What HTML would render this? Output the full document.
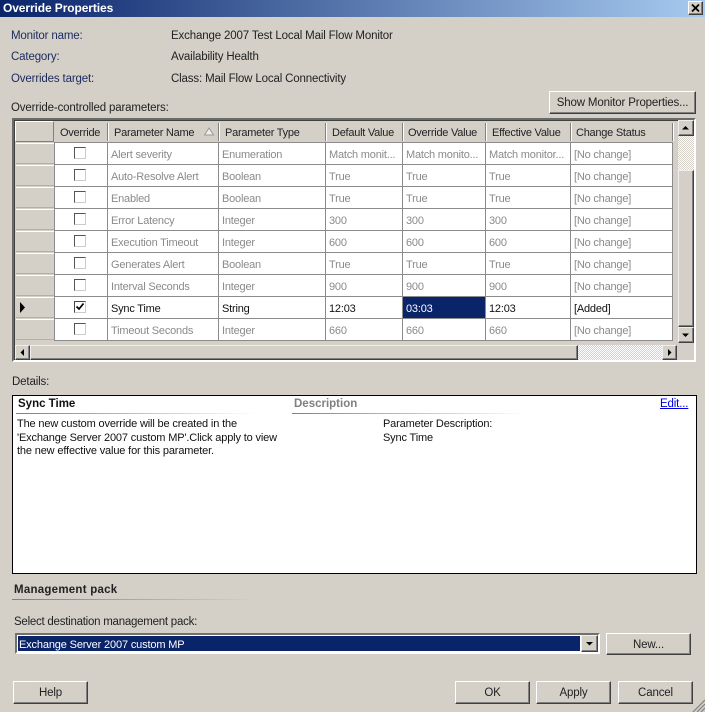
<!DOCTYPE html>
<html><head><meta charset="utf-8"><title>Override Properties</title>
<style>
html,body{margin:0;padding:0}
body{width:705px;height:712px;overflow:hidden;background:#d4d0c8;position:relative;font:11.5px/14px "Liberation Sans",sans-serif;color:#222}
div,span,a{position:absolute;white-space:nowrap;box-sizing:border-box}
.t{letter-spacing:-.15px;margin-top:1px}
.btn.t{margin-top:0}
.s{font-size:11px;letter-spacing:-.15px;margin-top:1px}
.n{color:#1a2a5e}
.btn{background:#d4d0c8;border:1px solid;border-color:#fff #404040 #404040 #fff;box-shadow:inset -1px -1px 0 #808080;text-align:center;color:#222}
.sb{background:#d4d0c8;border:1px solid;border-color:#eee #404040 #404040 #eee;box-shadow:inset -1px -1px 0 #808080}
.dith{background:repeating-conic-gradient(#fff 0 25%,#d4d0c8 0 50%) 0 0/2px 2px}
.h{top:123px;height:20px;line-height:20px;color:#222;font-size:11px;letter-spacing:-.25px}
.sep{top:123px;height:18px;width:2px;background:#fff;border-left:1px solid #808080}
.rh{left:16px;width:38px;height:21px;background:#d4d0c8;border-top:1px solid #fff;border-bottom:1px solid #b4b0a8}
.hl{left:54px;width:619px;height:1px;background:#8c8c8c}
.vl{top:142px;height:198px;width:1px;background:#8c8c8c}
.c{height:21px;line-height:22px;color:#8a8a8a;font-size:11px;letter-spacing:-.2px;margin-top:1px}
.k{color:#111}
.cb{left:74px;width:12px;height:12px;background:#fff;border:1px solid;border-color:#555 #ccc #ccc #555}
</style></head><body>

<div style="left:0;top:0;width:705px;height:17px;background:linear-gradient(90deg,#0a246a,#a6caf0)"></div>
<div style="left:3px;top:1px;color:#fff;font-weight:bold;font-size:12px;line-height:15px;letter-spacing:-.1px">Override Properties</div>
<div class="btn" style="left:688px;top:1px;width:15px;height:14px"><svg width="13" height="12" style="position:absolute;left:0;top:0"><path d="M3 2.5L10 9.5M10 2.5L3 9.5" stroke="#000" stroke-width="1.8" fill="none"/></svg></div>

<div class="t n" style="left:11px;top:28px">Monitor name:</div>
<div class="t" style="left:171px;top:28px">Exchange 2007 Test Local Mail Flow Monitor</div>
<div class="t n" style="left:11px;top:49px">Category:</div>
<div class="t" style="left:171px;top:49px">Availability Health</div>
<div class="t n" style="left:11px;top:71px">Overrides target:</div>
<div class="t" style="left:171px;top:71px">Class: Mail Flow Local Connectivity</div>
<div class="t" style="left:11px;top:100px">Override-controlled parameters:</div>
<div class="btn t" style="left:549px;top:91px;width:147px;height:23px;line-height:22px">Show Monitor Properties...</div>

<!-- Grid frame -->
<div style="left:12px;top:118px;width:684px;height:244px;border:2px solid;border-color:#6a6a66 #fff #fff #6a6a66;background:#d4d0c8;box-shadow:inset 1px 1px 0 #404040"></div>
<div style="left:54px;top:142px;width:619px;height:198px;background:#fff"></div>
<div style="left:15px;top:121px;width:39px;height:21px;border-top:1px solid #fff;border-left:1px solid #fff;border-right:1px solid #808080;border-bottom:1px solid #808080"></div>

<div class="h" style="left:60px">Override</div>
<div class="h" style="left:114px">Parameter Name</div>
<div class="h" style="left:225px">Parameter Type</div>
<div class="h" style="left:332px">Default Value</div>
<div class="h" style="left:408px">Override Value</div>
<div class="h" style="left:492px">Effective Value</div>
<div class="h" style="left:576px">Change Status</div>
<svg style="position:absolute;left:204px;top:127px" width="11" height="9"><path d="M5 1L9.5 8H.5Z" fill="#eee" stroke="#999" stroke-width="1"/></svg>
<div class="sep" style="left:107px"></div>
<div class="sep" style="left:218px"></div>
<div class="sep" style="left:325px"></div>
<div class="sep" style="left:402px"></div>
<div class="sep" style="left:485px"></div>
<div class="sep" style="left:570px"></div>
<div class="sep" style="left:672px"></div>

<!-- Row headers -->
<div class="rh" style="top:143px"></div><div class="rh" style="top:165px"></div><div class="rh" style="top:187px"></div><div class="rh" style="top:209px"></div><div class="rh" style="top:231px"></div><div class="rh" style="top:253px"></div><div class="rh" style="top:275px"></div><div class="rh" style="top:297px"></div><div class="rh" style="top:319px"></div>
<div style="left:54px;top:142px;width:1px;height:198px;background:#8c8c8c"></div>

<!-- Grid lines -->
<div class="hl" style="top:142px"></div><div class="hl" style="top:164px"></div><div class="hl" style="top:186px"></div><div class="hl" style="top:208px"></div><div class="hl" style="top:230px"></div><div class="hl" style="top:252px"></div><div class="hl" style="top:274px"></div><div class="hl" style="top:296px"></div><div class="hl" style="top:318px"></div><div class="hl" style="top:340px"></div>
<div class="vl" style="left:107px"></div><div class="vl" style="left:218px"></div><div class="vl" style="left:325px"></div><div class="vl" style="left:402px"></div><div class="vl" style="left:485px"></div><div class="vl" style="left:570px"></div><div class="vl" style="left:672px"></div>

<!-- Selected cell -->
<div style="left:403px;top:297px;width:82px;height:21px;background:#0a246a"></div>

<!-- Row 1 -->
<div class="cb" style="top:147px"></div>
<div class="c" style="left:111px;top:143px">Alert severity</div><div class="c" style="left:222px;top:143px">Enumeration</div><div class="c" style="left:329px;top:143px">Match monit...</div><div class="c" style="left:406px;top:143px">Match monito...</div><div class="c" style="left:489px;top:143px">Match monitor...</div><div class="c" style="left:574px;top:143px">[No change]</div>
<!-- Row 2 -->
<div class="cb" style="top:169px"></div>
<div class="c" style="left:111px;top:165px">Auto-Resolve Alert</div><div class="c" style="left:222px;top:165px">Boolean</div><div class="c" style="left:329px;top:165px">True</div><div class="c" style="left:406px;top:165px">True</div><div class="c" style="left:489px;top:165px">True</div><div class="c" style="left:574px;top:165px">[No change]</div>
<!-- Row 3 -->
<div class="cb" style="top:191px"></div>
<div class="c" style="left:111px;top:187px">Enabled</div><div class="c" style="left:222px;top:187px">Boolean</div><div class="c" style="left:329px;top:187px">True</div><div class="c" style="left:406px;top:187px">True</div><div class="c" style="left:489px;top:187px">True</div><div class="c" style="left:574px;top:187px">[No change]</div>
<!-- Row 4 -->
<div class="cb" style="top:213px"></div>
<div class="c" style="left:111px;top:209px">Error Latency</div><div class="c" style="left:222px;top:209px">Integer</div><div class="c" style="left:329px;top:209px">300</div><div class="c" style="left:406px;top:209px">300</div><div class="c" style="left:489px;top:209px">300</div><div class="c" style="left:574px;top:209px">[No change]</div>
<!-- Row 5 -->
<div class="cb" style="top:235px"></div>
<div class="c" style="left:111px;top:231px">Execution Timeout</div><div class="c" style="left:222px;top:231px">Integer</div><div class="c" style="left:329px;top:231px">600</div><div class="c" style="left:406px;top:231px">600</div><div class="c" style="left:489px;top:231px">600</div><div class="c" style="left:574px;top:231px">[No change]</div>
<!-- Row 6 -->
<div class="cb" style="top:257px"></div>
<div class="c" style="left:111px;top:253px">Generates Alert</div><div class="c" style="left:222px;top:253px">Boolean</div><div class="c" style="left:329px;top:253px">True</div><div class="c" style="left:406px;top:253px">True</div><div class="c" style="left:489px;top:253px">True</div><div class="c" style="left:574px;top:253px">[No change]</div>
<!-- Row 7 -->
<div class="cb" style="top:279px"></div>
<div class="c" style="left:111px;top:275px">Interval Seconds</div><div class="c" style="left:222px;top:275px">Integer</div><div class="c" style="left:329px;top:275px">900</div><div class="c" style="left:406px;top:275px">900</div><div class="c" style="left:489px;top:275px">900</div><div class="c" style="left:574px;top:275px">[No change]</div>
<!-- Row 8 -->
<svg style="position:absolute;left:19px;top:302px" width="7" height="12"><path d="M1 0L6 5.5L1 11Z" fill="#000"/></svg>
<div class="cb" style="top:301px;border-color:#444 #ccc #ccc #444"><svg width="10" height="10" style="position:absolute;left:0;top:0"><path d="M1.5 4.5L4 7L8.5 1.5" stroke="#000" stroke-width="1.7" fill="none"/></svg></div>
<div class="c k" style="left:111px;top:297px">Sync Time</div><div class="c k" style="left:222px;top:297px">String</div><div class="c k" style="left:329px;top:297px">12:03</div><div class="c" style="left:406px;top:297px;color:#fff">03:03</div><div class="c k" style="left:489px;top:297px">12:03</div><div class="c k" style="left:574px;top:297px">[Added]</div>
<!-- Row 9 -->
<div class="cb" style="top:323px"></div>
<div class="c" style="left:111px;top:319px">Timeout Seconds</div><div class="c" style="left:222px;top:319px">Integer</div><div class="c" style="left:329px;top:319px">660</div><div class="c" style="left:406px;top:319px">660</div><div class="c" style="left:489px;top:319px">660</div><div class="c" style="left:574px;top:319px">[No change]</div>

<!-- Vertical scrollbar -->
<div class="dith" style="left:678px;top:136px;width:16px;height:34px"></div>
<div class="sb" style="left:678px;top:170px;width:16px;height:157px"></div>
<div class="sb" style="left:678px;top:120px;width:16px;height:16px"><svg width="14" height="14" style="position:absolute;left:0;top:0"><path d="M3 8.5H10L6.5 5Z" fill="#000"/></svg></div>
<div class="sb" style="left:678px;top:327px;width:16px;height:16px"><svg width="14" height="14" style="position:absolute;left:0;top:0"><path d="M3 5.5H10L6.5 9Z" fill="#000"/></svg></div>

<!-- Horizontal scrollbar -->
<div class="dith" style="left:578px;top:345px;width:84px;height:15px"></div>
<div class="sb" style="left:15px;top:345px;width:15px;height:15px"><svg width="13" height="13" style="position:absolute;left:0;top:0"><path d="M8 3V10L4.5 6.5Z" fill="#000"/></svg></div>
<div class="sb" style="left:30px;top:345px;width:548px;height:15px"></div>
<div class="sb" style="left:662px;top:345px;width:15px;height:15px"><svg width="13" height="13" style="position:absolute;left:0;top:0"><path d="M5 3V10L8.5 6.5Z" fill="#000"/></svg></div>

<!-- Details -->
<div class="t" style="left:12px;top:374px">Details:</div>
<div style="left:12px;top:395px;width:685px;height:179px;background:#fff;border:1px solid #000"></div>
<div style="left:18px;top:397px;font-weight:bold;font-size:11.5px;line-height:15px;color:#111">Sync Time</div>
<div style="left:294px;top:397px;font-weight:bold;font-size:11.5px;line-height:15px;color:#808080">Description</div>
<div style="left:16px;top:413px;width:240px;height:1px;background:linear-gradient(90deg,#808080,#fff)"></div>
<div style="left:292px;top:413px;width:236px;height:1px;background:linear-gradient(90deg,#808080,#fff)"></div>
<a class="t" style="left:660px;top:396px;color:#0000e0;text-decoration:underline">Edit...</a>
<div class="s" style="left:17px;top:417px;line-height:13.5px;color:#111">The new custom override will be created in the<br>'Exchange Server 2007 custom MP'.Click apply to view<br>the new effective value for this parameter.</div>
<div class="s" style="left:383px;top:417px;line-height:13.5px;color:#111">Parameter Description:<br>Sync Time</div>

<!-- Management pack -->
<div style="left:14px;top:583px;font-weight:bold;font-size:11.5px;line-height:15px;color:#222;letter-spacing:.25px">Management pack</div>
<div style="left:12px;top:599px;width:245px;height:1px;background:linear-gradient(90deg,#808080,#d4d0c8)"></div>
<div style="left:14px;top:615px;letter-spacing:-.25px">Select destination management pack:</div>
<div style="left:15px;top:633px;width:585px;height:21px;border:2px solid;border-color:#707070 #fff #fff #707070;background:#fff"></div>
<div style="left:17px;top:635px;width:564px;height:17px;background:#0a246a;border:1px solid #fff"></div>
<div class="s" style="left:19px;top:637px;color:#fff">Exchange Server 2007 custom MP</div>
<div class="sb" style="left:581px;top:635px;width:17px;height:17px"><svg width="15" height="15" style="position:absolute;left:0;top:0"><path d="M4 6H11L7.5 9.5Z" fill="#000"/></svg></div>
<div class="btn t" style="left:606px;top:633px;width:85px;height:22px;line-height:22px">New...</div>

<!-- Bottom buttons -->
<div class="btn t" style="left:13px;top:681px;width:75px;height:23px;line-height:22px">Help</div>
<div class="btn t" style="left:455px;top:681px;width:75px;height:23px;line-height:22px">OK</div>
<div class="btn t" style="left:536px;top:681px;width:75px;height:23px;line-height:22px">Apply</div>
<div class="btn t" style="left:618px;top:681px;width:75px;height:23px;line-height:22px">Cancel</div>
<svg style="position:absolute;left:692px;top:699px" width="13" height="13"><path d="M13 1L1 13M13 5L5 13M13 9L9 13" stroke="#808080" stroke-width="1.2" fill="none"/></svg>
</body></html>
